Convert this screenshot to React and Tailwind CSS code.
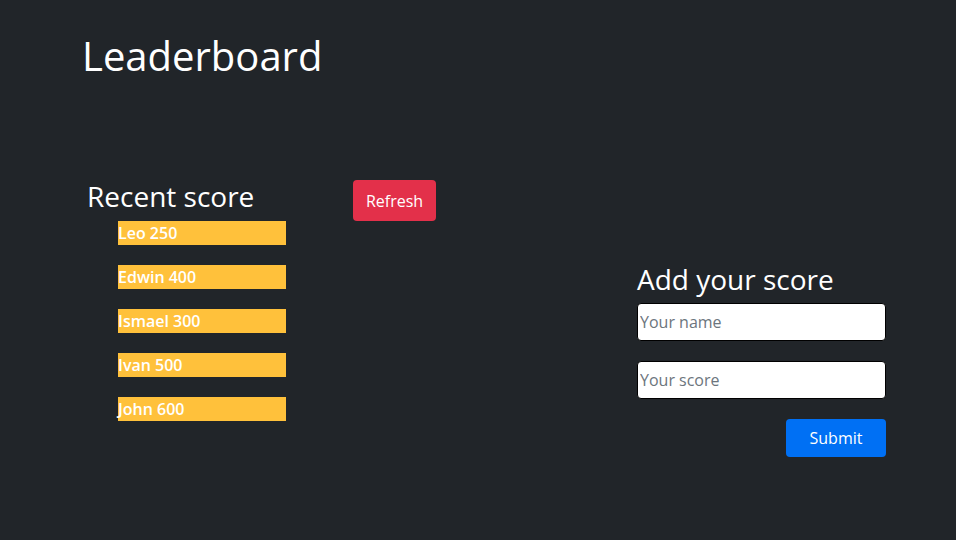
export default function App() {
  const scores = [
    ["Leo", 250],
    ["Edwin", 400],
    ["Ismael", 300],
    ["Ivan", 500],
    ["John", 600],
  ];
  return (
    <div
      className="min-h-[540px] w-full bg-[#212529] text-white"
      style={{ fontFamily: '"Open Sans", "Noto Sans", sans-serif' }}
    >
      <h1 className="pl-[82px] pt-[30px] text-[40px] leading-[52px] font-normal">Leaderboard</h1>
      <div className="mt-[98px] flex items-start">
        <div className="ml-[87px] w-[266px] flex flex-col">
          <h2 className="text-[28px] leading-[33px] font-normal">Recent score</h2>
          <ul className="mt-[8px] ml-[31px] flex flex-col gap-[20px]">
            {scores.map(([n, s]) => (
              <li
                key={n}
                className="w-[168px] h-[24px] bg-[#ffc13b] text-[16px] leading-[24px] font-semibold text-white"
              >
                {n} {s}
              </li>
            ))}
          </ul>
        </div>
        <button className="w-[83px] h-[41px] rounded-[4px] bg-[#e3304a] text-[16px] text-white">
          Refresh
        </button>
        <div className="ml-[201px] mt-[82px] w-[249px] flex flex-col">
          <h2 className="text-[28px] leading-[34px] font-normal">Add your score</h2>
          <input
            className="mt-[7px] h-[38px] w-full rounded-[4px] border border-black bg-white pl-[2px] text-[16px] text-black placeholder:text-[#6c757d] outline-none"
            placeholder="Your name"
          />
          <input
            className="mt-[20px] h-[38px] w-full rounded-[4px] border border-black bg-white pl-[2px] text-[16px] text-black placeholder:text-[#6c757d] outline-none"
            placeholder="Your score"
          />
          <div className="mt-[20px] flex justify-end">
            <button className="w-[100px] h-[38px] rounded-[4px] bg-[#0070f4] text-[16px] text-white">
              Submit
            </button>
          </div>
        </div>
      </div>
    </div>
  );
}
